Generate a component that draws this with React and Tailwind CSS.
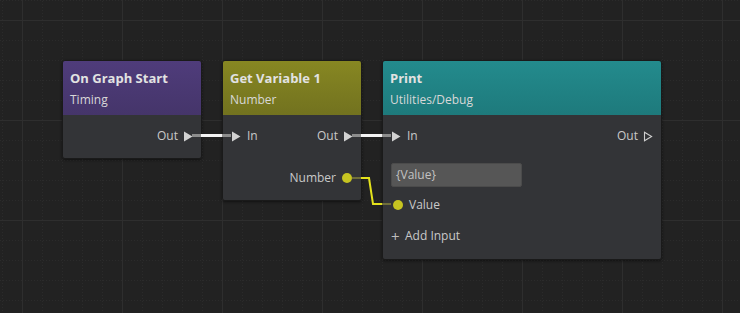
import React from 'react';

const Tri = ({ hollow }) => (
  <svg width="10" height="11" viewBox="0 0 10 11" className="shrink-0">
    {hollow ? (
      <path d="M1.5 1.2 L8.6 5.5 L1.5 9.8 Z" fill="none" stroke="#cfcfcf" strokeWidth="1.1" />
    ) : (
      <path d="M1 0.5 L9.5 5.5 L1 10.5 Z" fill="#d2d2d2" />
    )}
  </svg>
);

const Dot = () => <span className="block w-[10px] h-[10px] rounded-full bg-[#c6c421] shrink-0" />;

const Node = ({ className, head, title, subtitle, children }) => (
  <div className={`absolute top-[60px] border border-[#1a1a1a] rounded-[3px] overflow-hidden shadow-[0_1px_3px_rgba(0,0,0,0.5)] ${className}`}>
    <div className={`h-[54px] pl-[7px] pt-[8px] flex flex-col ${head}`}>
      <div className="text-[13px] font-bold leading-[18px] text-[#e2e2e2]">{title}</div>
      <div className="mt-[4px] text-[12px] leading-[18px] text-[#d8d8d8]">{subtitle}</div>
    </div>
    <div className="bg-[#333437] text-[12px] text-[#c9c9c9] px-[8px] pt-[11px] pb-[12px] flex flex-col">
      {children}
    </div>
  </div>
);

const Grid = () => (
  <svg className="absolute inset-0" width="740" height="313">
    <defs>
      <pattern id="g" x="22" y="20" width="100" height="100" patternUnits="userSpaceOnUse">
        {[20, 40, 60, 80].map((p) => (
          <g key={p}>
            <line x1={p + 0.5} y1="0" x2={p + 0.5} y2="100" stroke="#2b2b2b" strokeDasharray="1 2" />
            <line x1="0" y1={p + 0.5} x2="100" y2={p + 0.5} stroke="#2b2b2b" strokeDasharray="1 2" />
          </g>
        ))}
        <line x1="0.5" y1="0" x2="0.5" y2="100" stroke="#2e2e2e" />
        <line x1="0" y1="0.5" x2="100" y2="0.5" stroke="#2e2e2e" />
      </pattern>
    </defs>
    <rect width="740" height="313" fill="url(#g)" />
  </svg>
);

const Wires = () => (
  <svg className="absolute inset-0 pointer-events-none" width="740" height="313">
    {/* exec wires */}
    <line x1="192" y1="135.5" x2="201" y2="135.5" stroke="#8d8d8d" strokeWidth="3" />
    <line x1="201" y1="135.5" x2="222" y2="135.5" stroke="#f4f4f4" strokeWidth="3" />
    <line x1="222" y1="135.5" x2="231" y2="135.5" stroke="#8d8d8d" strokeWidth="3" />
    <line x1="352" y1="135.5" x2="361" y2="135.5" stroke="#8d8d8d" strokeWidth="3" />
    <line x1="361" y1="135.5" x2="382" y2="135.5" stroke="#f4f4f4" strokeWidth="3" />
    <line x1="382" y1="135.5" x2="391" y2="135.5" stroke="#8d8d8d" strokeWidth="3" />
    {/* data wire */}
    <line x1="352" y1="178" x2="361" y2="178" stroke="#6f6e3a" strokeWidth="2" />
    <polyline points="361,178 369,178 373,204 382,204" fill="none" stroke="#e4e21c" strokeWidth="2" />
    <line x1="382" y1="204" x2="391" y2="204" stroke="#6f6e3a" strokeWidth="2" />
  </svg>
);

export default function App() {
  return (
    <div className="relative w-[740px] h-[313px] overflow-hidden bg-[#222222] font-['Open_Sans',sans-serif]">
      <Grid />

      <Node
        className="left-[62px] w-[140px]"
        head="bg-linear-to-b from-[#4f3c7b] to-[#45356a]"
        title="On Graph Start"
        subtitle="Timing"
      >
        <div className="h-5 flex items-center justify-end gap-[5px]">
          <span>Out</span>
          <Tri />
        </div>
      </Node>

      <Node
        className="left-[222px] w-[140px]"
        head="bg-linear-to-b from-[#878722] to-[#72721f]"
        title="Get Variable 1"
        subtitle="Number"
      >
        <div className="h-5 flex items-center justify-between">
          <div className="flex items-center gap-[6px]">
            <Tri />
            <span>In</span>
          </div>
          <div className="flex items-center gap-[5px]">
            <span>Out</span>
            <Tri />
          </div>
        </div>
        <div className="h-5 mt-[22px] flex items-center justify-end gap-[6px] pr-[1px]">
          <span>Number</span>
          <Dot />
        </div>
      </Node>

      <Node
        className="left-[382px] w-[280px]"
        head="bg-linear-to-b from-[#238b8d] to-[#1e7a7c]"
        title="Print"
        subtitle="Utilities/Debug"
      >
        <div className="h-5 flex items-center justify-between">
          <div className="flex items-center gap-[6px]">
            <Tri />
            <span>In</span>
          </div>
          <div className="flex items-center gap-[5px]">
            <span>Out</span>
            <Tri hollow />
          </div>
        </div>
        <div className="mt-[17px] w-[131px] h-[24px] rounded-[2px] bg-[#565656] border border-[#4b4b4b] flex items-center px-[4px] text-[#c2c2c2]">
          {'{Value}'}
        </div>
        <div className="h-5 mt-[8px] flex items-center gap-[6px] pl-[2px]">
          <Dot />
          <span>Value</span>
        </div>
        <div className="h-5 mt-[11px] mb-[1px] flex items-center gap-[6px]">
          <span className="text-[15px] leading-none text-[#bdbdbd] w-[8px] text-center">+</span>
          <span>Add Input</span>
        </div>
      </Node>

      <Wires />
    </div>
  );
}
